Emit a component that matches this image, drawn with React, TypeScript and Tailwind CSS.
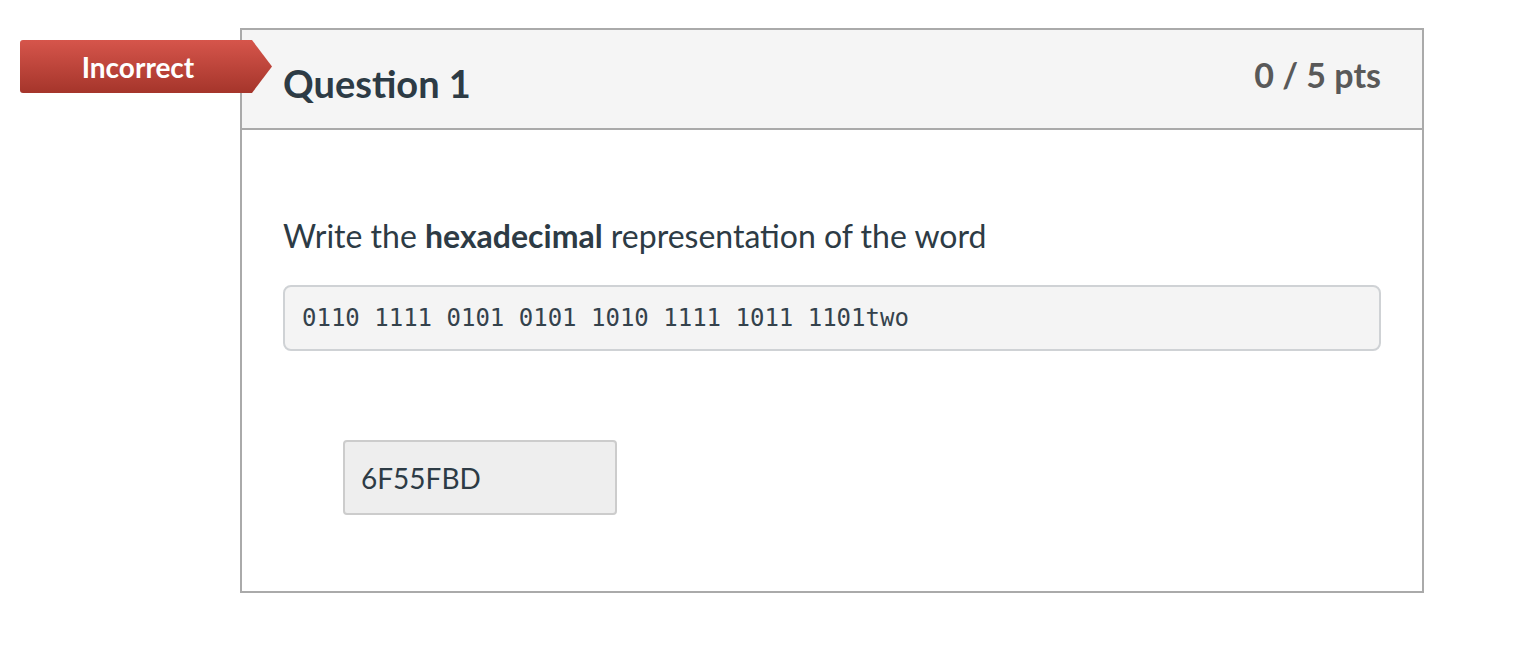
export default function App() {
  return (
    <div className="min-h-[646px] w-[1530px] bg-white pl-[240px] pt-[28px] font-['Lato','Liberation_Sans',sans-serif] text-[#2d3b45]">
      <div className="relative w-[1184px] border-2 border-[#aaaaaa]">
        {/* Incorrect badge */}
        <div className="absolute left-[-222px] top-[10px] flex h-[53px] w-[252px] items-center rounded-l-[3px] bg-gradient-to-b from-[#d6554b] to-[#a5352b] [clip-path:polygon(0_0,232px_0,252px_50%,232px_100%,0_100%)]">
          <span className="w-[236px] text-center text-[28px] font-bold leading-none text-white">Incorrect</span>
        </div>

        {/* Header */}
        <div className="flex h-[100px] items-start justify-between border-b-2 border-[#aaaaaa] bg-[#f5f5f5] px-[41px]">
          <h2 className="mt-[33px] text-[38px] font-bold leading-[40px] text-[#2d3b45]">Question 1</h2>
          <div className="mt-[25px] text-[34px] font-bold leading-[40px] text-[#595959]">0 / 5 pts</div>
        </div>

        {/* Body */}
        <div className="px-[41px] pb-[76px] pt-[86px]">
          <p className="text-[32px] leading-[40px]">
            Write the <strong className="font-bold">hexadecimal</strong> representation of the word
          </p>
          <div className="mt-[29px] flex h-[66px] items-center rounded-[8px] border-2 border-[#cfd2d5] bg-[#f4f4f4] px-[17px] font-['DejaVu_Sans_Mono',monospace] text-[24px] text-[#34424c]">
            0110 1111 0101 0101 1010 1111 1011 1101two
          </div>
          <div className="ml-[60px] mt-[89px] flex h-[75px] w-[274px] items-center rounded-[4px] border-2 border-[#cccccc] bg-[#eeeeee] px-[16px] text-[28px]">
            6F55FBD
          </div>
        </div>
      </div>
    </div>
  );
}
